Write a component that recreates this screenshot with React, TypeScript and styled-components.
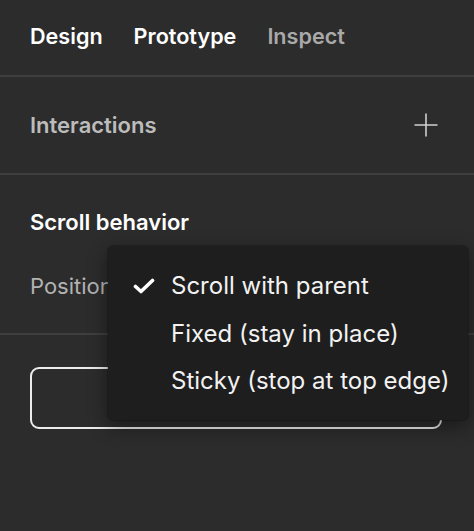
import styled, { createGlobalStyle } from "styled-components";

const GlobalStyle = createGlobalStyle`
  html, body {
    margin: 0;
    padding: 0;
    background: #2c2c2c;
  }
  body {
    font-family: Inter, "Noto Sans", sans-serif;
    -webkit-font-smoothing: antialiased;
  }
`;

const Panel = styled.div`
  position: relative;
  width: 474px;
  height: 531px;
  background: #2c2c2c;
  overflow: hidden;
`;

const Tabs = styled.div`
  display: flex;
  align-items: center;
  gap: 31px;
  height: 72px;
  padding: 0 30px 3px;
  border-bottom: 2px solid #3f3f3f;
`;

const Tab = styled.span<{ $active?: boolean }>`
  font-size: 21.6px;
  font-weight: 600;
  color: ${(p) => (p.$active ? "#ffffff" : "#a9a9a9")};
`;

const Section = styled.div<{ $height: number }>`
  display: flex;
  flex-direction: column;
  justify-content: center;
  height: ${(p) => p.$height}px;
  padding: 0 30px;
  border-bottom: 2px solid #3f3f3f;
`;

const HeaderRow = styled.div`
  display: flex;
  align-items: center;
  justify-content: space-between;
`;

const SectionTitle = styled.span<{ $muted?: boolean }>`
  font-size: 22px;
  line-height: 27px;
  font-weight: 600;
  color: ${(p) => (p.$muted ? "#bcbcbc" : "#ffffff")};
`;

const PlusButton = styled.span`
  display: flex;
  width: 24px;
  height: 24px;
  margin-right: 6px;
`;

const Field = styled.div`
  display: flex;
  flex-direction: column;
  gap: 37px;
  padding: 34px 30px 0;
  height: 160px;
  box-sizing: border-box;
  border-bottom: 2px solid #3f3f3f;
`;

const FieldLabel = styled.span`
  font-size: 22px;
  line-height: 27px;
  font-weight: 400;
  color: #b3b3b3;
`;

const Footer = styled.div`
  padding: 32px 32px 0 30px;
`;

const OutlineButton = styled.div`
  height: 58px;
  border: 2px solid #ececec;
  border-radius: 9px;
`;

const Menu = styled.div`
  position: absolute;
  left: 108px;
  top: 246px;
  width: 360px;
  height: 174px;
  box-sizing: border-box;
  padding: 16px 0 14px;
  background: #1e1e1e;
  border-radius: 5px;
  box-shadow: 0 6px 20px rgba(0, 0, 0, 0.45), 0 0 0 1px rgba(0, 0, 0, 0.2);
  display: flex;
  flex-direction: column;
`;

const MenuItem = styled.div`
  display: flex;
  align-items: center;
  height: 47.5px;
  font-size: 24px;
  color: #f2f2f2;
`;

const CheckSlot = styled.span`
  display: flex;
  align-items: center;
  justify-content: center;
  width: 63px;
  padding-left: 8px;
  box-sizing: border-box;
`;

const Check = () => (
  <svg width="22" height="16" viewBox="0 0 22 16">
    <path
      d="M2.5 8.5 L8 13.5 L19.5 2.5"
      fill="none"
      stroke="#ffffff"
      strokeWidth="3.6"
      strokeLinecap="round"
      strokeLinejoin="round"
    />
  </svg>
);

const Plus = () => (
  <svg width="24" height="24" viewBox="0 0 24 24">
    <path d="M12 0.5 V23.5 M0.5 12 H23.5" stroke="#cfcfcf" strokeWidth="1.6" />
  </svg>
);

const options = [
  { label: "Scroll with parent", checked: true },
  { label: "Fixed (stay in place)", checked: false },
  { label: "Sticky (stop at top edge)", checked: false },
];

export default function App() {
  return (
    <>
      <GlobalStyle />
      <Panel>
        <Tabs>
          <Tab $active>Design</Tab>
          <Tab $active>Prototype</Tab>
          <Tab>Inspect</Tab>
        </Tabs>
        <Section $height={96}>
          <HeaderRow>
            <SectionTitle $muted>Interactions</SectionTitle>
            <PlusButton>
              <Plus />
            </PlusButton>
          </HeaderRow>
        </Section>
        <Field>
          <SectionTitle>Scroll behavior</SectionTitle>
          <FieldLabel>Position</FieldLabel>
        </Field>
        <Footer>
          <OutlineButton />
        </Footer>
        <Menu>
          {options.map((o) => (
            <MenuItem key={o.label}>
              <CheckSlot>{o.checked && <Check />}</CheckSlot>
              {o.label}
            </MenuItem>
          ))}
        </Menu>
      </Panel>
    </>
  );
}
